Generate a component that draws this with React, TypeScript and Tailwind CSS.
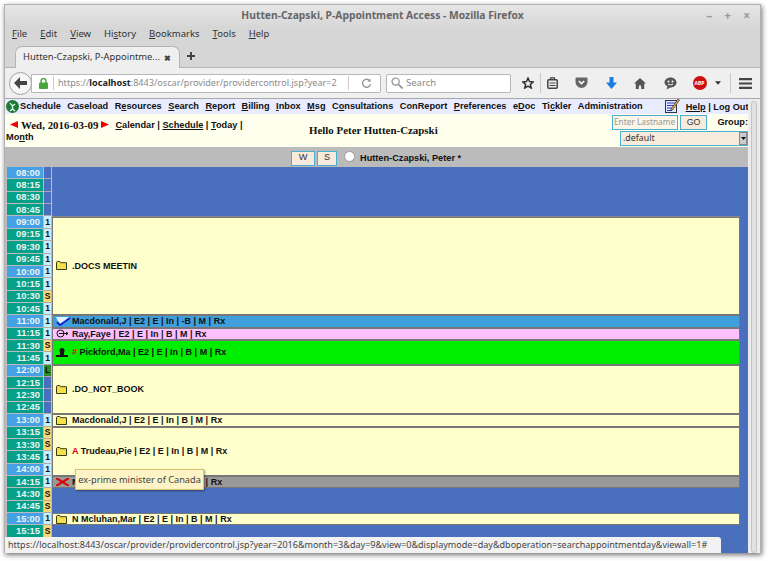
import React from "react";

const rows: [string, string][] = [
  ["08:00", ""], ["08:15", ""], ["08:30", ""], ["08:45", ""],
  ["09:00", "1"], ["09:15", "1"], ["09:30", "1"], ["09:45", "1"],
  ["10:00", "1"], ["10:15", "1"], ["10:30", "S"], ["10:45", "1"],
  ["11:00", "1"], ["11:15", "1"], ["11:30", "S"], ["11:45", "1"],
  ["12:00", "L"], ["12:15", ""], ["12:30", ""], ["12:45", ""],
  ["13:00", "1"], ["13:15", "S"], ["13:30", "S"], ["13:45", "1"],
  ["14:00", "1"], ["14:15", "1"], ["14:30", "S"], ["14:45", "S"],
  ["15:00", "1"], ["15:15", "S"], ["15:30", "S"],
];

function Folder() {
  return (
    <svg width="11" height="9" viewBox="0 0 11 9" className="shrink-0">
      <path d="M.5 8.5V1.2L1.2.5h2.6l.8 1.2h5.9v6.8z" fill="#f4e04a" stroke="#3a3a10" strokeWidth="1" />
    </svg>
  );
}

function Row({ icon, children, cls }: { icon?: React.ReactNode; children: React.ReactNode; cls: string }) {
  return (
    <div className={`flex items-center box-border border border-[#777] pl-[2px] pt-[1px] font-bold text-[9px] text-[#111] whitespace-nowrap ${cls}`}>
      <span className="w-[17px] flex items-center justify-start shrink-0 pl-[1px] -mt-[1px]">{icon}</span>
      <span>{children}</span>
    </div>
  );
}

function MenuItem({ a, u, b }: { a?: string; u?: string; b?: string }) {
  return <span>{a}{u ? <u>{u}</u> : null}{b}</span>;
}

const Sep = () => <div className="w-px h-[20px] bg-[#c8c8c8]" />;

export default function App() {
  const chrome = { fontFamily: '"Noto Sans", sans-serif' };
  return (
    <div className="w-[768px] h-[561px] bg-white overflow-hidden pt-[4px] pl-[4px]" style={{ fontFamily: '"Liberation Sans", Arial, sans-serif' }}>
      <div className="relative w-[757px] h-[549px] overflow-hidden flex flex-col bg-[#d6d6d6] border-l border-r border-t border-[#b0b0b0] shadow-[1px_2px_5px_rgba(0,0,0,0.55)]">
        {/* Title */}
        <div style={chrome} className="h-[21px] shrink-0 flex items-center bg-gradient-to-b from-[#e6e6e6] to-[#d8d8d8]">
          <div className="flex-1 text-center text-[10.3px] font-bold text-[#666] pl-[60px]">Hutten-Czapski, P-Appointment Access - Mozilla Firefox</div>
          <div className="w-[60px] flex items-center justify-end gap-[12px] pr-[10px] text-[#999] text-[12px] leading-none font-bold">
            <span>–</span><span>+</span><span>×</span>
          </div>
        </div>
        {/* Menu */}
        <div style={chrome} className="h-[17px] shrink-0 flex items-center gap-[13px] pl-[7px] text-[9.5px] text-[#333]">
          <span><u>F</u>ile</span><span><u>E</u>dit</span><span><u>V</u>iew</span><span>Hi<u>s</u>tory</span><span><u>B</u>ookmarks</span><span><u>T</u>ools</span><span><u>H</u>elp</span>
        </div>
        {/* Tabs */}
        <div style={chrome} className="h-[25px] shrink-0 flex items-end pl-[10px] border-b border-[#b4b4b4]">
          <div className="w-[165px] h-[22px] -mb-px flex items-center bg-[#efefef] rounded-t-[7px] border border-b-0 border-[#b4b4b4] pl-[7px] text-[9.4px] text-[#333]">
            <span className="w-[141px] whitespace-nowrap">Hutten-Czapski, P-Appointme...</span>
            <span className="text-[8px] font-bold text-[#444]">✖</span>
          </div>
          <svg width="8" height="8" viewBox="0 0 8 8" className="ml-[7px] mb-[7px]"><path d="M3 0h2v3h3v2H5v3H3V5H0V3h3z" fill="#444" /></svg>
        </div>
        {/* Nav */}
        <div style={chrome} className="h-[31px] shrink-0 flex items-center bg-[#efefef] border-b border-[#a8a8a8] pl-[4px]">
          <div className="relative z-10 w-[23px] h-[23px] rounded-full bg-[#f6f6f6] border border-[#a0a0a0] flex items-center justify-center shrink-0">
            <svg width="13" height="12" viewBox="0 0 13 12"><path d="M6 0 0 6l6 6V8h7V4H6z" fill="#444" /></svg>
          </div>
          <div className="-ml-[1px] w-[350px] h-[19px] bg-white border border-[#b8b8b8] rounded-r-[2px] flex items-center shrink-0">
            <svg width="9" height="11" viewBox="0 0 9 11" className="ml-[7px] shrink-0"><path d="M2 5V3a2.5 2.5 0 0 1 5 0v2" stroke="#4aa53a" strokeWidth="1.4" fill="none" /><rect y="4.5" width="9" height="6.5" rx="1" fill="#4aa53a" /></svg>
            <div className="w-px h-[14px] bg-[#ccc] ml-[5px]" />
            <div className="w-[279px] ml-[4px] overflow-hidden whitespace-nowrap text-[9.1px] text-[#8a8a8a]">https://<span className="text-[#222] font-bold">localhost</span>:8443/oscar/provider/providercontrol.jsp?year=2</div>
            <div className="w-px h-[14px] bg-[#ccc] ml-[11px]" />
            <svg width="11" height="11" viewBox="0 0 11 11" className="ml-[12px]"><path d="M9 3.2A4 4 0 1 0 9.5 6" stroke="#9a9a9a" strokeWidth="1.4" fill="none" /><path d="M9.5.5v3.2H6.3z" fill="#9a9a9a" /></svg>
          </div>
          <div className="ml-[5px] w-[125px] h-[19px] bg-white border border-[#b8b8b8] rounded-[2px] flex items-center shrink-0">
            <svg width="12" height="12" viewBox="0 0 12 12" className="ml-[4px]"><circle cx="4.6" cy="4.6" r="3.6" stroke="#8a8a8a" strokeWidth="1.2" fill="none" /><path d="m7.5 7.5 4 4" stroke="#8a8a8a" strokeWidth="1.6" /></svg>
            <span className="ml-[3px] text-[9.5px] text-[#8a8a8a]">Search</span>
          </div>
          <div className="flex items-center shrink-0">
            <span className="w-[29px] flex justify-end pr-[6px]">
              <svg width="12" height="12" viewBox="0 0 24 24"><path d="m12 2 3 7 7.500 .7-5.700 5 1.700 7.300-6.500-3.900-6.500 3.900 1.700-7.300-5.700-5 7.500-.7z" fill="none" stroke="#333" strokeWidth="3" /></svg>
            </span>
            <Sep />
            <span className="w-[23px] flex justify-center">
              <svg width="11" height="12" viewBox="0 0 11 12"><rect x=".8" y="2.800" width="9.400" height="8.400" rx="1" fill="none" stroke="#444" strokeWidth="1.500" /><path d="M3.500 2.800V.8h4v2M2.500 6h6M2.500 8.500h6" stroke="#444" strokeWidth="1.200" fill="none" /></svg>
            </span>
            <span className="w-[34px] flex justify-center">
              <svg width="13" height="12" viewBox="0 0 13 12"><path d="M1.500 .5h10a1 1 0 0 1 1 1V5a6 6 0 0 1-12 0V1.500a1 1 0 0 1 1-1z" fill="#666" /><path d="m3.800 4 2.700 2.600L9.200 4" stroke="#fff" strokeWidth="1.500" fill="none" /></svg>
            </span>
            <span className="w-[26px] flex justify-center">
              <svg width="11" height="12" viewBox="0 0 11 12"><path d="M3.500 0h4v5.500H11L5.500 12 0 5.500h3.500z" fill="#1a7fe0" /></svg>
            </span>
            <span className="w-[32px] flex justify-center">
              <svg width="12" height="11" viewBox="0 0 12 11"><path d="M6 0 0 5.500h1.800V11h3V7.500h2.400V11h3V5.500H12z" fill="#555" /></svg>
            </span>
            <span className="w-[28px] flex justify-center">
              <svg width="13" height="13" viewBox="0 0 13 13"><path d="M6.500 .5c3.300 0 6 2.200 6 5s-2.700 5-6 5l-4 2 1-3c-1.500-1-3-2.400-3-4 0-2.800 2.700-5 6-5z" fill="#555" /><circle cx="4.500" cy="4.500" r="1" fill="#fff" /><circle cx="8.500" cy="4.500" r="1" fill="#fff" /><path d="M4 7c1.500 1 3.500 1 5 0" stroke="#fff" fill="none" /></svg>
            </span>
            <span className="w-[31px] flex justify-center">
              <span className="w-[14px] h-[14px] rounded-full bg-[#cc1010] text-white text-[5px] font-bold flex items-center justify-center leading-none">ABP</span>
            </span>
            <span className="w-[6px] flex justify-center">
              <svg width="7" height="4" viewBox="0 0 7 4"><path d="M0 0h7L3.500 4z" fill="#333" /></svg>
            </span>
            <span className="w-[9px]" />
            <Sep />
            <span className="w-[28px] flex justify-center">
              <svg width="13" height="11" viewBox="0 0 13 11"><path d="M0 0h13v2.200H0zM0 4.400h13v2.200H0zM0 8.800h13V11H0z" fill="#444" /></svg>
            </span>
          </div>
        </div>

        {/* Page */}
        <div className="flex flex-1 min-h-0 bg-[#e8e8e8]">
          <div className="w-[743px] shrink-0 flex flex-col min-h-0">
            {/* Oscar menu */}
            <div className="h-[15px] shrink-0 flex items-center pt-[1px] bg-[#e9ebff] text-[9.2px] font-bold text-[#111] whitespace-nowrap">
              <svg width="13" height="13" viewBox="0 0 13 13" className="ml-[1px] shrink-0 -mt-[1px]"><circle cx="6.500" cy="6.500" r="6.500" fill="#1f7a3a" /><path d="M4 3c2 3 3 3 5 1M6.500 5v4L4 11M6.500 9 9 11" stroke="#dfe" strokeWidth="1.300" fill="none" /></svg>
              <div className="flex items-center gap-[6.500px] ml-[1px]">
                <MenuItem a="Schedule" />
                <MenuItem a="Caseload" />
                <MenuItem a="R" u="e" b="sources" />
                <MenuItem u="S" b="earch" />
                <MenuItem u="R" b="eport" />
                <MenuItem u="B" b="illing" />
                <MenuItem u="I" b="nbox" />
                <MenuItem u="M" b="sg" />
                <MenuItem a="C" u="o" b="nsultations" />
                <MenuItem a="ConReport" />
                <MenuItem u="P" b="references" />
                <MenuItem a="e" u="D" b="oc" />
                <MenuItem a="Ti" u="c" b="kler" />
                <MenuItem a="Administration" />
              </div>
              <svg width="15" height="15" viewBox="0 0 15 15" className="ml-[22px] shrink-0 -mt-[3px]"><rect x=".5" y="2.500" width="11" height="12" fill="#dfe4ff" stroke="#334" /><path d="M2 5h8M2 7.500h8M2 10h6M2 12.500h5" stroke="#3040c0" /><path d="m6 11 7-10 1.500 1-7 10-2 1z" fill="#e8b030" stroke="#222" strokeWidth=".6" /></svg>
              <span className="ml-[6px] mt-[2px]"><u>Help</u> | <span>Log Out</span></span>
            </div>
            {/* Date row */}
            <div className="h-[33px] shrink-0 flex bg-[#ffffee] text-[9.2px] font-bold text-[#111]">
              <div className="w-[247px] shrink-0 pl-[1px] pt-[5px] leading-[12px]">
                <div className="flex items-center whitespace-nowrap">
                  <svg width="8" height="7" viewBox="0 0 8 7" className="ml-[4px] -mt-[2px]"><path d="M8 0v7L0 3.500z" fill="#ee0000" /></svg>
                  <span className="ml-[3px] text-[10.9px]" style={{ fontFamily: '"Liberation Serif", serif' }}>Wed, 2016-03-09</span>
                  <svg width="8" height="7" viewBox="0 0 8 7" className="ml-[3px] -mt-[2px]"><path d="M0 0v7l8-3.500z" fill="#ee0000" /></svg>
                  <span className="ml-[6px]"><u>C</u>alendar | <u>Schedule</u> | <u>T</u>oday |</span>
                </div>
                <div className="mt-0">Mo<u>n</u>th</div>
              </div>
              <div className="flex-1 flex items-center pl-[57px] text-[10.9px] whitespace-nowrap" style={{ fontFamily: '"Liberation Serif", serif' }}>Hello Peter Hutten-Czapski</div>
              <div className="w-[136px] shrink-0 flex flex-col">
                <div className="flex items-center h-[17px]">
                  <div className="w-[66px] h-[15px] box-border border border-[#4ab0d0] bg-[#fbf6e8] flex items-center pl-[1px] text-[8.300px] font-normal text-[#999] whitespace-nowrap overflow-hidden" style={chrome}>Enter Lastname</div>
                  <div className="ml-[2px] w-[28px] h-[15px] box-border border border-[#4ab0d0] bg-[#f6ebdc] flex items-center justify-center text-[8.800px] font-normal text-[#333]">GO</div>
                  <span className="ml-[10px] whitespace-nowrap">Group:</span>
                </div>
                <div className="ml-[8px] w-[128px] h-[15px] box-border border border-[#4ab0d0] bg-[#f6ebdc] flex items-center justify-between pl-[2px] text-[8.800px] font-normal text-[#333]" style={chrome}>
                  <span>.default</span>
                  <span className="w-[8px] h-[13px] bg-[#ccc] border border-[#888] flex items-center justify-center"><svg width="5" height="3" viewBox="0 0 5 3"><path d="M0 0h5L2.500 3z" fill="#111" /></svg></span>
                </div>
              </div>
            </div>
            {/* Buttons row */}
            <div className="h-[20px] shrink-0 flex items-center bg-[#bbbbbb] pl-[286px] text-[9.200px] font-bold text-[#111]">
              <div className="w-[24px] h-[15px] mt-[2px] box-border border border-[#4ab0d0] bg-[#f6ebdc] flex items-center justify-center font-normal text-[#333]">W</div>
              <div className="ml-[2px] w-[20px] h-[15px] mt-[2px] box-border border border-[#4ab0d0] bg-[#f6ebdc] flex items-center justify-center font-normal text-[#333]">S</div>
              <div className="ml-[7px] w-[11px] h-[11px] rounded-full bg-white border border-[#999] -mt-[2px]" />
              <span className="ml-[5px] mt-[4px] whitespace-nowrap">Hutten-Czapski, Peter *</span>
            </div>
            {/* Schedule */}
            <div className="flex-1 min-h-0 overflow-hidden flex bg-[#bbbbbb]">
              <div className="w-[39px] shrink-0 pl-[2px] pr-[1px] flex flex-col">
                {rows.map(([t]) => (
                  <div key={t} className={`h-[12.360px] shrink-0 box-border border-b border-[#bbbbbb] flex items-center justify-end pr-[3px] text-[9.400px] font-bold text-[#eaf6f4] ${t.endsWith(":00") ? "bg-[#45a0e6]" : "bg-[#04a088]"}`}>{t}</div>
                ))}
              </div>
              <div className="w-[7px] shrink-0 flex flex-col">
                {rows.map(([t, c]) => (
                  <div key={t} className={`h-[12.360px] shrink-0 box-border border-b border-[#aaaaaa] flex items-center justify-center text-[8.500px] font-bold text-[#111] ${c === "1" ? "bg-[#c8eeff]" : c === "S" ? "bg-[#f8d878]" : c === "L" ? "bg-[#2f8a2a]" : "bg-[#4a6fbd]"}`}>{c}</div>
                ))}
              </div>
              <div className="flex-1 ml-[1px] flex flex-col bg-[#4a6fbd] pr-[8px]">
                <div className="h-[49.500px] shrink-0 border-b border-[#888]" />
                <Row cls="h-[98.900px] shrink-0 bg-[#ffffcc]" icon={<Folder />}>.DOCS MEETIN</Row>
                <Row cls="h-[12.400px] shrink-0 bg-[#3f9fdc]" icon={<svg width="15" height="10" viewBox="0 0 15 10"><path d="M0 0h13L4 9z" fill="#dff0fb" /><path d="M1 5l3 3L14 1" stroke="#1020d0" strokeWidth="1.800" fill="none" /></svg>}>Macdonald,J | E2 | E | In | -B | M | Rx</Row>
                <Row cls="h-[12.300px] shrink-0 bg-[#ffc0ff]" icon={<svg width="13" height="9" viewBox="0 0 13 9"><circle cx="4.500" cy="4.500" r="3.500" stroke="#111" fill="none" /><path d="M3 4.500h9M10 3l2 1.500-2 1.500" stroke="#111" fill="none" /></svg>}>Ray,Faye | E2 | E | In | B | M | Rx</Row>
                <Row cls="h-[24.700px] shrink-0 bg-[#00ee00]" icon={<svg width="12" height="9" viewBox="0 0 12 9"><circle cx="6" cy="2.500" r="2.500" fill="#111" /><path d="M4 4h4v3h4v2H0V7h4z" fill="#111" /></svg>}><span className="text-[#e00000]">#</span> Pickford,Ma | E2 | E | In | B | M | Rx</Row>
                <Row cls="h-[49.400px] shrink-0 bg-[#ffffcc]" icon={<Folder />}>.DO_NOT_BOOK</Row>
                <Row cls="h-[12.400px] shrink-0 bg-[#ffffcc]" icon={<Folder />}>Macdonald,J | E2 | E | In | B | M | Rx</Row>
                <Row cls="h-[49.400px] shrink-0 bg-[#ffffcc]" icon={<Folder />}><span className="text-[#e00000]">A</span> Trudeau,Pie | E2 | E | In | B | M | Rx</Row>
                <Row cls="h-[12.400px] shrink-0 bg-[#999999]" icon={<svg width="13" height="8" viewBox="0 0 13 8"><path d="m0 0 13 8M13 0 0 8" stroke="#e00000" strokeWidth="2" /></svg>}>Macdonald,J | E2 | E | In | B | M | Rx</Row>
                <div className="h-[24.700px] shrink-0" />
                <Row cls="h-[12.400px] shrink-0 bg-[#ffffcc]" icon={<Folder />}>N Mcluhan,Mar | E2 | E | In | B | M | Rx</Row>
              </div>
            </div>
          </div>
          {/* scrollbar gutter */}
          <div className="flex-1 bg-[#ececec] flex pl-[3px] pt-[2px]">
            <div className="w-[6px] h-full bg-[#e2e2e2] border border-[#c4c4c4] rounded-[3px]" />
          </div>
        </div>

        {/* Tooltip */}
        <div style={chrome} className="absolute left-[70px] top-[464px] w-[129px] h-[21px] box-border bg-[#fdf3c4] border border-[#d9c272] shadow-[1px_1px_2px_rgba(0,0,0,0.4)] flex items-center justify-center text-[9.200px] text-[#444] whitespace-nowrap">ex-prime minister of Canada</div>
        {/* Status */}
        <div style={chrome} className="absolute left-0 bottom-0 w-[716px] h-[16px] bg-[#f2f2f2] rounded-tr-[3px] flex items-center pl-[3px] text-[9.050px] text-[#444] whitespace-nowrap overflow-hidden">https://localhost:8443/oscar/provider/providercontrol.jsp?year=2016&amp;month=3&amp;day=9&amp;view=0&amp;displaymode=day&amp;dboperation=searchappointmentday&amp;viewall=1#</div>
      </div>
    </div>
  );
}
